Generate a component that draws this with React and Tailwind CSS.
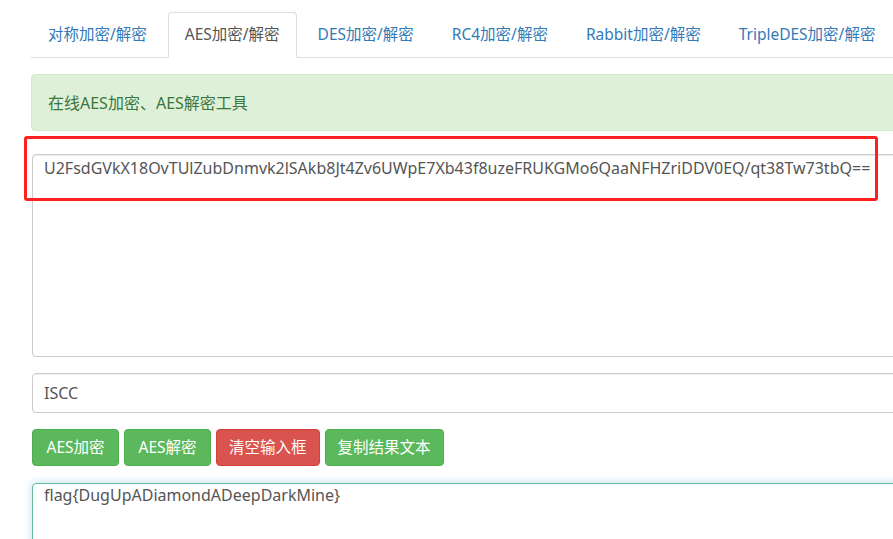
import React from 'react';

const tabs = ['对称加密/解密', 'AES加密/解密', 'DES加密/解密', 'RC4加密/解密', 'Rabbit加密/解密', 'TripleDES加密/解密'];

const font = { fontFamily: '"Noto Sans", "Noto Sans CJK SC", sans-serif' };

function Tabs({ active = 1 }) {
  return (
    <div className="flex items-end border-b border-[#ddd] pt-[12px]">
      {tabs.map((t, i) => (
        <div
          key={t}
          className={
            i === active
              ? 'mr-[4px] -mb-[1px] px-[16px] h-[46px] flex items-center border border-[#ddd] border-b-white rounded-t-[4px] bg-white text-[#555] text-[15.5px] whitespace-nowrap'
              : 'mr-[4px] -mb-[1px] px-[16px] h-[46px] flex items-center border border-transparent text-[#337ab7] text-[15.5px] whitespace-nowrap'
          }
        >
          {t}
        </div>
      ))}
    </div>
  );
}

export default function App() {
  return (
    <div className="relative w-[893px] h-[539px] overflow-hidden bg-white text-[#555]" style={font}>
      <div className="w-[1000px] pl-[31px]">
        <Tabs />

        <div className="mt-[16px] h-[57px] flex items-center px-[16px] bg-[#dff0d8] border border-[#d6e9c6] rounded-[4px] text-[#3c763d] text-[16px]">
          在线AES加密、AES解密工具
        </div>

        <div className="mt-[23px] ml-[1px] h-[203px] border border-[#ccc] rounded-[4px] px-[11px] pt-[1px] text-[16px] leading-[24px] shadow-[inset_0_1px_1px_rgba(0,0,0,0.075)]">
          U2FsdGVkX18OvTUlZubDnmvk2lSAkb8Jt4Zv6UWpE7Xb43f8uzeFRUKGMo6QaaNFHZriDDV0EQ/qt38Tw73tbQ==
        </div>

        <div className="mt-[16px] ml-[1px] h-[40px] flex items-center border border-[#ccc] rounded-[4px] px-[11px] text-[16px] shadow-[inset_0_1px_1px_rgba(0,0,0,0.075)]">
          ISCC
        </div>

        <div className="mt-[16px] ml-[1px] flex gap-[5px]">
          <button className="h-[37px] px-[13.5px] rounded-[4px] bg-[#5cb85c] border border-[#4cae4c] text-white text-[15.5px]">AES加密</button>
          <button className="h-[37px] px-[13.5px] rounded-[4px] bg-[#5cb85c] border border-[#4cae4c] text-white text-[15.5px]">AES解密</button>
          <button className="h-[37px] px-[12px] rounded-[4px] bg-[#d9534f] border border-[#d43f3a] text-white text-[15.5px]">清空输入框</button>
          <button className="h-[37px] px-[12px] rounded-[4px] bg-[#5cb85c] border border-[#4cae4c] text-white text-[15.5px]">复制结果文本</button>
        </div>

        <div className="mt-[17px] ml-[1px] h-[80px] border border-[#66bb99] rounded-[4px] px-[11px] text-[16px] leading-[22px] shadow-[0_0_8px_rgba(102,175,233,0.45)]">
          flag&#123;DugUpADiamondADeepDarkMine&#125;
        </div>
      </div>

      <div className="absolute left-[24px] top-[136px] w-[854px] h-[65px] border-[3px] border-[#ff2020] rounded-[3px]" />
    </div>
  );
}
